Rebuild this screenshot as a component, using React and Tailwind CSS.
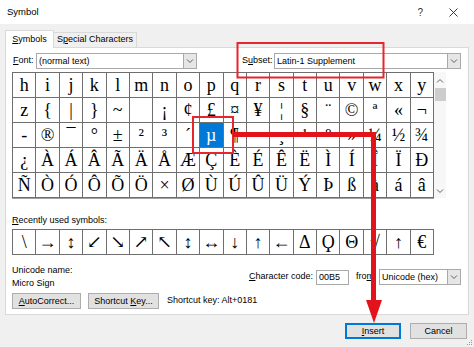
import React from 'react';

const rows = [
  ['h', 'i', 'j', 'k', 'l', 'm', 'n', 'o', 'p', 'q', 'r', 's', 't', 'u', 'v', 'w', 'x', 'y'],
  ['z', '{', '|', '}', '~', '', '¡', '¢', '£', '¤', '¥', '¦', '§', '¨', '©', 'ª', '«', '¬'],
  ['-', '®', '¯', '°', '±', '²', '³', '´', 'µ', '¶', '·', '¸', '¹', 'º', '»', '¼', '½', '¾'],
  ['¿', 'À', 'Á', 'Â', 'Ã', 'Ä', 'Å', 'Æ', 'Ç', 'È', 'É', 'Ê', 'Ë', 'Ì', 'Í', 'Î', 'Ï', 'Ð'],
  ['Ñ', 'Ò', 'Ó', 'Ô', 'Õ', 'Ö', '×', 'Ø', 'Ù', 'Ú', 'Û', 'Ü', 'Ý', 'Þ', 'ß', 'à', 'á', 'â'],
];

const recent = ['\\', '→', '↕', '↙', '↘', '↗', '↖', '↕', '↔', '↓', '↑', '←', 'Δ', 'Ϙ', 'Θ', '√', '↑', '€'];

const Chevron = ({ up }) => (
  <svg width="8" height="5" viewBox="0 0 8 5">
    <polyline
      points={up ? '1,4.5 4,1.5 7,4.5' : '1,0.5 4,3.5 7,0.5'}
      fill="none"
      stroke="#606060"
      strokeWidth="1"
    />
  </svg>
);

const Select = ({ width, children }) => (
  <div className={`flex h-[16px] items-center border border-[#a9a9a9] bg-white ${width}`}>
    <span className="flex-1 pl-[2px] leading-[14px]">{children}</span>
    <span className="flex h-full w-[13px] items-center justify-center border-l border-[#a9a9a9] bg-[#e6e6e6]">
      <Chevron />
    </span>
  </div>
);

const Cell = ({ ch, active }) => (
  <div
    className={`flex h-[25px] items-center justify-center border-r border-b border-[#6f6f6f] leading-none ${
      active ? 'bg-[#0078d7] text-white' : ''
    }`}
  >
    {ch}
  </div>
);

const Button = ({ width, children, focus }) => (
  <div
    className={`flex h-[16px] items-center justify-center bg-[#e1e1e1] leading-none ${width} ${
      focus ? 'border-2 border-[#0078d7]' : 'border border-[#adadad]'
    }`}
  >
    {children}
  </div>
);

export default function App() {
  return (
    <div className="relative h-[347px] w-[474px] overflow-hidden bg-[#f0f0f0] font-['Liberation_Sans',Arial,sans-serif] text-[9px] text-black">
      {/* Title bar */}
      <div className="flex h-[24px] items-center bg-white pl-[7px]">
        <span className="text-[9.5px]">Symbol</span>
        <span className="ml-auto mr-[26px] text-[10px] text-[#333]">?</span>
        <svg width="9" height="9" viewBox="0 0 9 9" className="mr-[16px]">
          <path d="M0.5 0.5 L8.5 8.5 M8.5 0.5 L0.5 8.5" stroke="#222" strokeWidth="0.9" />
        </svg>
      </div>

      <div className="px-[5px] pt-[6px]">
        {/* Tabs */}
        <div className="relative z-10 flex h-[17px] items-end">
          <div className="-mb-px flex h-[18px] w-[49px] items-center justify-center border border-b-0 border-[#d9d9d9] bg-white">
            <span><span className="underline">S</span>ymbols</span>
          </div>
          <div className="flex h-[15px] w-[83px] items-center justify-center border border-b-0 border-l-0 border-[#d9d9d9] bg-[#f0f0f0]">
            <span>S<span className="underline">p</span>ecial Characters</span>
          </div>
        </div>

        {/* Panel */}
        <div className="h-[268px] border border-[#d9d9d9] bg-white px-[6px] pt-[5px]">
          <div className="flex items-center">
            <span className="w-[24px] pl-[1px]"><span className="underline">F</span>ont:</span>
            <Select width="w-[161px]">(normal text)</Select>
            <span className="ml-[45px] w-[32px]">S<span className="underline">u</span>bset:</span>
            <Select width="w-[187px]">Latin-1 Supplement</Select>
          </div>

          {/* Symbol grid */}
          <div className="mt-[3px] flex">
            <div className="grid w-[422px] grid-cols-[repeat(18,1fr)] border-t border-l border-[#6f6f6f] font-['Liberation_Serif','DejaVu_Serif',serif] text-[18px] shadow-[0_1px_0_#a0a0a0]">
              {rows.flat().map((ch, i) => (
                <Cell key={i} ch={ch} active={ch === 'µ'} />
              ))}
            </div>
            <div className="flex h-[126px] w-[12px] flex-col items-center bg-[#f7f7f7]">
              <div className="flex h-[16px] items-center"><Chevron up /></div>
              <div className="h-[13px] w-[11px] bg-[#cdcdcd]" />
              <div className="flex-1" />
              <div className="flex h-[14px] items-center"><Chevron /></div>
            </div>
          </div>

          {/* Recently used */}
          <div className="mt-[16px] h-[12px] leading-[12px]">
            <span className="underline">R</span>ecently used symbols:
          </div>
          <div className="mt-[3px] grid w-[422px] grid-cols-[repeat(18,1fr)] border-t border-l border-[#6f6f6f] font-['Liberation_Serif','DejaVu_Serif',serif] text-[18px]">
            {recent.map((ch, i) => (
              <Cell key={i} ch={i === 16 ? <span className="font-bold">{ch}</span> : ch} />
            ))}
          </div>

          {/* Info */}
          <div className="mt-[9px] flex items-start">
            <div className="flex flex-col gap-[1px] leading-[12px]">
              <span>Unicode name:</span>
              <span>Micro Sign</span>
            </div>
            <div className="ml-auto mr-[1px] mt-[5px] flex items-center">
              <span><span className="underline">C</span>haracter code:</span>
              <div className="ml-[3px] flex h-[15px] w-[33px] items-center border border-[#a9a9a9] bg-white pl-[2px] leading-none">
                00B5
              </div>
              <span className="ml-[7px] w-[23px]">fro<span className="underline">m</span>:</span>
              <Select width="w-[82px]">Unicode (hex)</Select>
            </div>
          </div>

          <div className="mt-[4px] flex items-center">
            <Button width="w-[69px]"><span><span className="underline">A</span>utoCorrect...</span></Button>
            <div className="ml-[7px]">
              <Button width="w-[71px]"><span>Shortcut <span className="underline">K</span>ey...</span></Button>
            </div>
            <span className="ml-[8px]">Shortcut key: Alt+0181</span>
          </div>
        </div>

        {/* Dialog buttons */}
        <div className="mt-[8px] mr-[2px] flex justify-end gap-[9px]">
          <Button width="w-[56px]" focus><span><span className="underline">I</span>nsert</span></Button>
          <Button width="w-[57px]">Cancel</Button>
        </div>
      </div>

      {/* Resize grip */}
      <svg width="6" height="6" viewBox="0 0 6 6" className="absolute right-[1px] bottom-[1px]">
        <rect x="4" y="0" width="1" height="1" fill="#999" />
        <rect x="2" y="2" width="1" height="1" fill="#999" />
        <rect x="4" y="2" width="1" height="1" fill="#999" />
        <rect x="0" y="4" width="1" height="1" fill="#999" />
        <rect x="2" y="4" width="1" height="1" fill="#999" />
        <rect x="4" y="4" width="1" height="1" fill="#999" />
      </svg>

      {/* Annotations */}
      <svg width="474" height="347" viewBox="0 0 474 347" className="pointer-events-none absolute inset-0 z-20">
        <rect x="237.5" y="43" width="146" height="34.5" fill="none" stroke="#e5262d" strokeWidth="2" />
        <rect x="193" y="117" width="40" height="36" fill="none" stroke="#e5262d" strokeWidth="2" />
        <rect x="233" y="132" width="143" height="5" fill="#e3131b" />
        <rect x="371" y="132" width="5" height="172" fill="#e3131b" />
        <polygon points="366,300 382,300 374,323" fill="#e3131b" />
      </svg>
    </div>
  );
}
